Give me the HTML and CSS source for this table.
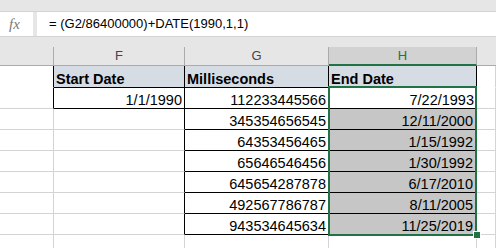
FILE: index.html
```html
<!DOCTYPE html>
<html>
<head>
<meta charset="utf-8">
<link rel="stylesheet" href="styles.css">
</head>
<body>
<div class="app">
  <div class="topband"></div>
  <div class="fbar">
    <div class="fxbox"><span class="fx">fx</span></div>
    <div class="finput">= (G2/86400000)+DATE(1990,1,1)</div>
  </div>
  <div class="midband"></div>
  <div class="sheet">
    <div class="colhead"></div>
    <div class="colhead">F</div>
    <div class="colhead">G</div>
    <div class="colhead sel">H</div>
    <div class="colhead last"></div>

    <div class="c r1 bkr"></div>
    <div class="c r1 th bkr bkb">Start Date</div>
    <div class="c r1 th bkr bkb">Milliseconds</div>
    <div class="c r1 th bkr bkb">End Date</div>
    <div class="c r1"></div>

    <div class="c bkr"></div>
    <div class="c num bkr bkb">1/1/1990</div>
    <div class="c num bkr bkb">112233445566</div>
    <div class="c num bkr bkb">7/22/1993</div>
    <div class="c"></div>

    <div class="c"></div>
    <div class="c bkr"></div>
    <div class="c num bkr bkb">345354656545</div>
    <div class="c num bkr bkb gray">12/11/2000</div>
    <div class="c"></div>

    <div class="c"></div>
    <div class="c bkr"></div>
    <div class="c num bkr bkb">64353456465</div>
    <div class="c num bkr bkb gray">1/15/1992</div>
    <div class="c"></div>

    <div class="c"></div>
    <div class="c bkr"></div>
    <div class="c num bkr bkb">65646546456</div>
    <div class="c num bkr bkb gray">1/30/1992</div>
    <div class="c"></div>

    <div class="c"></div>
    <div class="c bkr"></div>
    <div class="c num bkr bkb">645654287878</div>
    <div class="c num bkr bkb gray">6/17/2010</div>
    <div class="c"></div>

    <div class="c"></div>
    <div class="c bkr"></div>
    <div class="c num bkr bkb">492567786787</div>
    <div class="c num bkr bkb gray">8/11/2005</div>
    <div class="c"></div>

    <div class="c"></div>
    <div class="c bkr"></div>
    <div class="c num bkr bkb">943534645634</div>
    <div class="c num bkr bkb gray">11/25/2019</div>
    <div class="c"></div>

    <div class="c"></div>
    <div class="c"></div>
    <div class="c"></div>
    <div class="c"></div>
    <div class="c"></div>

    <div class="selbox"></div>
    <div class="handle"></div>
  </div>
</div>
</body>
</html>
```

FILE: styles.css
```css
html, body {
  margin: 0;
  padding: 0;
  background: #e6e6e6;
  overflow: hidden;
}
.app {
  width: 496px;
  height: 248px;
  overflow: hidden;
  font-family: "Liberation Sans", Arial, sans-serif;
}
.topband {
  height: 11px;
  background: #e6e6e6;
}
.fbar {
  display: flex;
  height: 26px;
  box-sizing: border-box;
  border-top: 1px solid #d4d4d4;
  border-bottom: 1px solid #d4d4d4;
  gap: 4px;
  background: #e6e6e6;
}
.fxbox {
  width: 33px;
  background: #fff;
  display: flex;
  align-items: center;
  justify-content: center;
}
.fx {
  font-family: "Liberation Serif", serif;
  font-style: italic;
  font-size: 15px;
  color: #7a7a7a;
  margin-left: -4px;
  margin-top: 0px;
}
.finput {
  flex: 1;
  background: #fff;
  font-size: 13px;
  line-height: 24px;
  padding-left: 12px;
  color: #000;
  white-space: nowrap;
}
.midband {
  height: 10px;
  background: #e6e6e6;
}
.sheet {
  position: relative;
  display: grid;
  grid-template-columns: 54px 131px 144px 148px 1fr;
  grid-template-rows: 19px 22px repeat(7, 21px) 21px;
  background: #fff;
}
.colhead {
  box-sizing: border-box;
  background: #e6e6e6;
  border-right: 1px solid #ababab;
  border-bottom: 1px solid #ababab;
  font-size: 13px;
  color: #444;
  text-align: center;
  line-height: 18px;
}
.colhead.sel {
  background: #d2d2d2;
  color: #217346;
  border-bottom: 2px solid #217346;
  line-height: 17px;
}
.colhead.last {
  border-right: none;
}
.c {
  box-sizing: border-box;
  border-right: 1px solid #d4d4d4;
  border-bottom: 1px solid #d4d4d4;
  font-size: 14.5px;
  line-height: 16px;
  color: #000;
  display: flex;
  align-items: flex-end;
  white-space: nowrap;
  overflow: hidden;
}
.c.r1 {
  border-bottom-color: transparent;
}
.c.r1.bkb {
  border-bottom-color: #000;
}
.bkr {
  border-right-color: #000;
}
.bkb {
  border-bottom-color: #000;
}
.th {
  background: #d6dce4;
  font-weight: bold;
  padding-left: 2px;
}
.num {
  justify-content: flex-end;
  padding-right: 2px;
}
.gray {
  background: #c6c6c6;
}
.num.gray, .sheet > .num:nth-child(19) {
  padding-right: 3px;
}
.selbox {
  position: absolute;
  left: 328px;
  top: 39px;
  width: 149px;
  height: 150px;
  box-sizing: border-box;
  border: 2px solid #217346;
  pointer-events: none;
}
.handle {
  position: absolute;
  left: 474px;
  top: 185px;
  width: 6px;
  height: 6px;
  background: #217346;
  box-shadow: 0 0 0 1px #fff;
}
```
